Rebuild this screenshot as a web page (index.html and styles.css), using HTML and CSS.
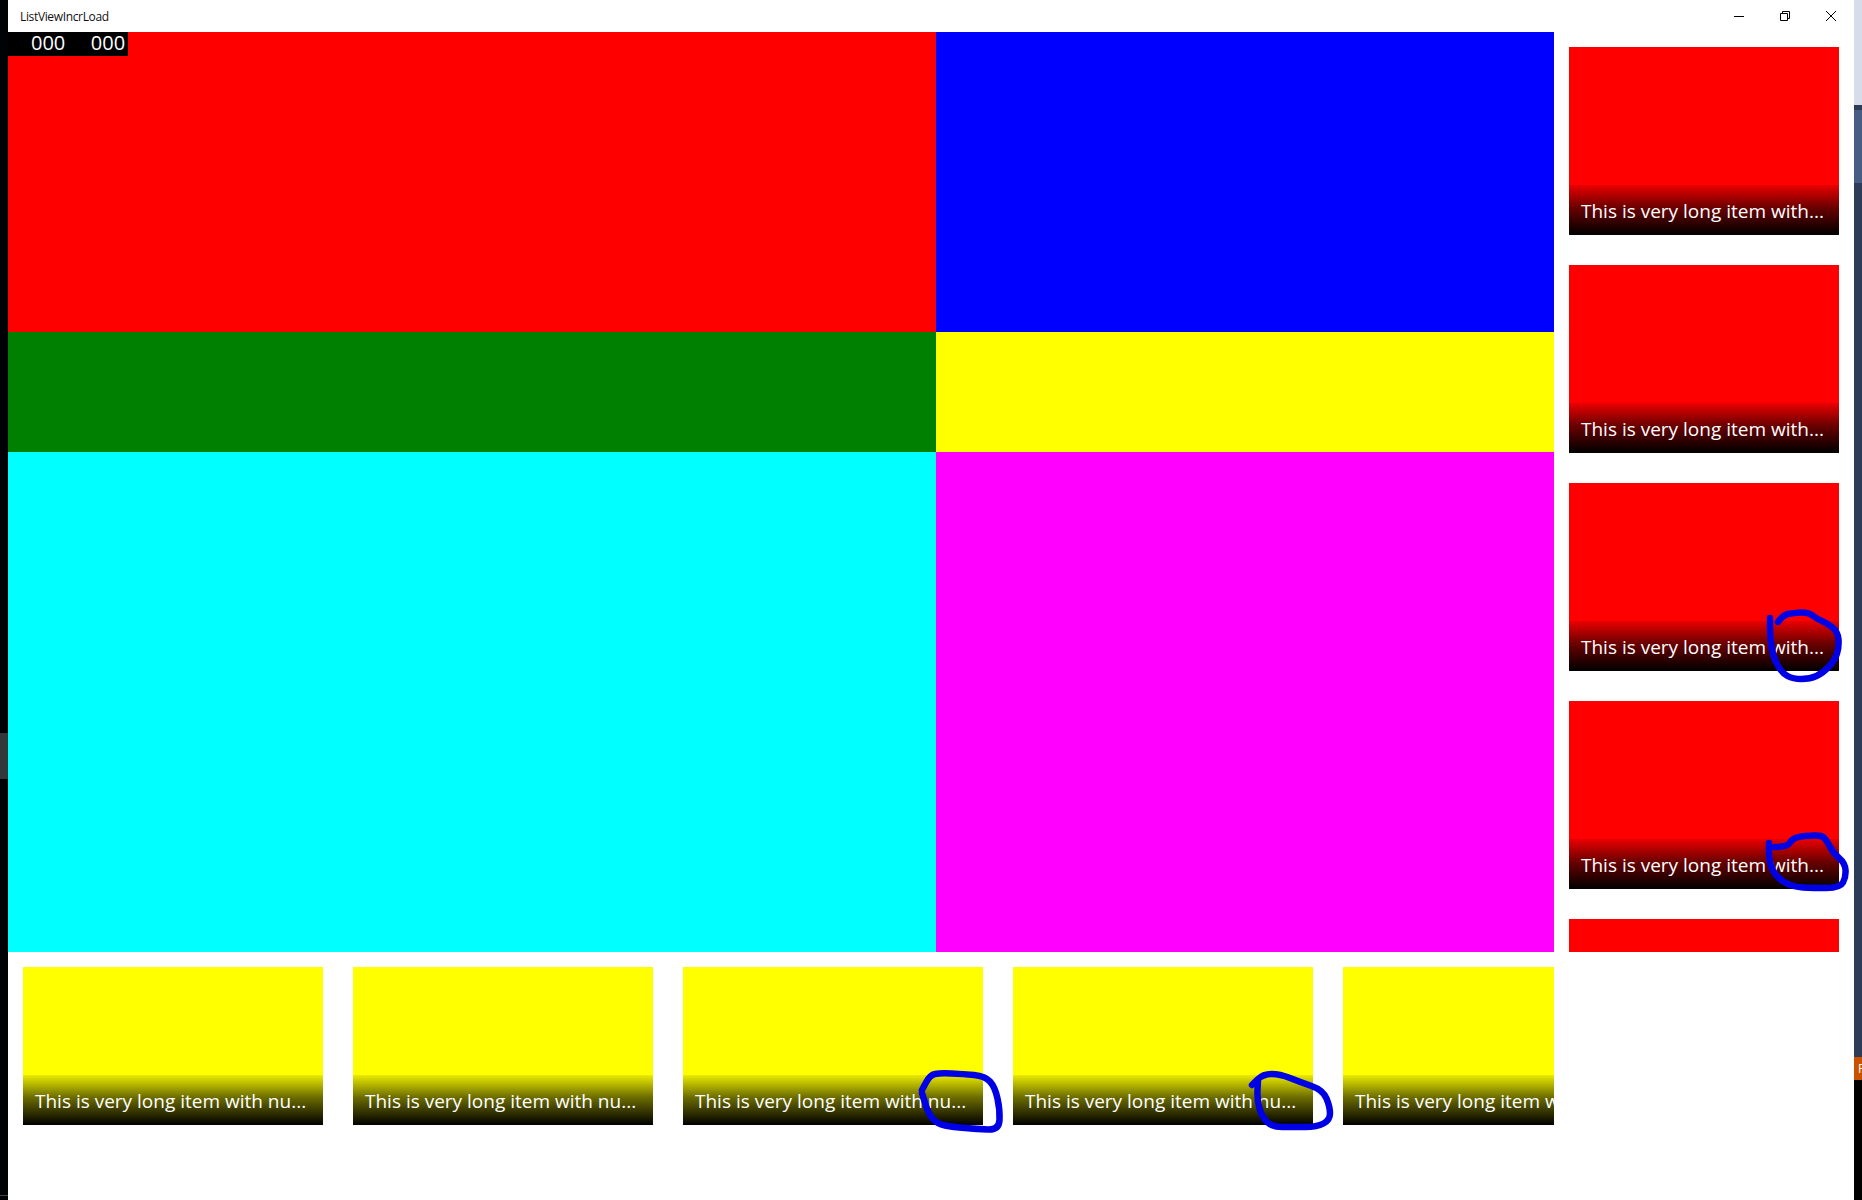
FILE: index.html
```html
<!DOCTYPE html>
<html lang="en">
<head>
<meta charset="utf-8">
<title>ListViewIncrLoad</title>
<link rel="stylesheet" href="styles.css">
</head>
<body>
<div class="desk">
  <div class="edge-left"><span class="edge-thumb"></span><span class="edge-line"></span></div>
  <main class="window">
    <header class="titlebar">
      <span class="app-title">ListViewIncrLoad</span>
      <div class="controls">
        <svg class="ctl" viewBox="0 0 10 10"><path d="M0 5.5H10"/></svg>
        <svg class="ctl" viewBox="0 0 10 10"><path d="M0.5 2.5H7.5V9.5H0.5ZM2.5 2.5V0.5H9.5V7.5H7.5"/></svg>
        <svg class="ctl" viewBox="0 0 10 10"><path d="M0 0L10 10M10 0L0 10"/></svg>
      </div>
    </header>
    <div class="content">
      <div class="left-col">
        <div class="grid">
          <div class="cell red"></div>
          <div class="cell blue"></div>
          <div class="cell green"></div>
          <div class="cell yellow"></div>
          <div class="cell cyan"></div>
          <div class="cell magenta"></div>
          <div class="fps"><span>000</span><span>000</span></div>
        </div>
        <div class="hlist">
          <div class="item hitem"><span class="cap">This is very long item with nu...</span></div>
          <div class="item hitem"><span class="cap">This is very long item with nu...</span></div>
          <div class="item hitem"><span class="cap">This is very long item with nu...</span></div>
          <div class="item hitem"><span class="cap">This is very long item with nu...</span></div>
          <div class="item hitem"><span class="cap">This is very long item with nu...</span></div>
        </div>
      </div>
      <div class="vlist">
        <div class="item vitem"><span class="cap">This is very long item with...</span></div>
        <div class="item vitem"><span class="cap">This is very long item with...</span></div>
        <div class="item vitem"><span class="cap">This is very long item with...</span></div>
        <div class="item vitem"><span class="cap">This is very long item with...</span></div>
        <div class="item vitem"><span class="cap">This is very long item with...</span></div>
      </div>
    </div>
  </main>
  <div class="edge-right">
    <span class="er-light"></span>
    <span class="er-dark"><span class="er-thumb"></span></span>
    <span class="er-orange">F</span>
    <span class="er-black"></span>
  </div>
  <svg class="ink" viewBox="0 0 1862 1200">
    <path d="M1770 618L1770 628Q1770 637 1771.5 647Q1773 657 1777.5 665Q1782 673 1787.5 676Q1793 679 1801.5 679Q1810 679 1816.5 676Q1823 673 1829 666.5Q1835 660 1837 653.5Q1839 647 1838.5 639.5Q1838 632 1832.5 627.5Q1827 623 1822 621Q1817 619 1812.5 615.5Q1808 612 1800.5 612.5Q1793 613 1788 614Q1783 615 1778 622"/>
    <path d="M1769 843L1769 853Q1769 863 1773 870.5Q1777 878 1785 882.5Q1793 887 1803 887.5Q1813 888 1826.5 888Q1840 888 1843 882.5Q1846 877 1845.5 870Q1845 863 1839 858Q1833 853 1829 845Q1825 837 1821 836Q1817 835 1805 836Q1793 837 1790.5 842Q1788 847 1775 847"/>
    <path d="M922 1090L926 1082.5Q930 1075 935 1074Q940 1073 951.5 1073.5Q963 1074 974 1075Q985 1076 990 1081.5Q995 1087 997.5 1098.5Q1000 1110 999.5 1120Q999 1130 988 1129.5Q977 1129 965 1128Q953 1127 945 1125.5Q937 1124 932.5 1118.5Q928 1113 925 1103L922 1093"/>
    <path d="M1252 1085L1257.5 1079.5Q1263 1074 1271.5 1074Q1280 1074 1290 1078Q1300 1082 1311.5 1086Q1323 1090 1326.5 1098.5Q1330 1107 1330 1113.5Q1330 1120 1323.5 1123.5Q1317 1127 1305 1127Q1293 1127 1282.5 1127Q1272 1127 1267 1122Q1262 1117 1259.5 1108.5Q1257 1100 1257.5 1090L1258 1080"/>
  </svg>
</div>
</body>
</html>
```

FILE: styles.css
```css
* { box-sizing: border-box; }
html, body { margin: 0; padding: 0; height: 100%; background: #fff; overflow: hidden; }
.desk { position: relative; display: flex; width: 1862px; height: 1200px; }
.edge-left { flex: 0 0 8px; background: #010205; display: flex; flex-direction: column; padding-top: 733px; }
.edge-thumb { display: block; height: 46px; background: #33373a; }
.edge-line { display: block; height: 1px; margin-top: 416px; background: #444; }
.window { flex: 0 0 1846px; background: #fff; display: flex; flex-direction: column; }
.titlebar { flex: 0 0 32px; display: flex; align-items: center; justify-content: space-between; padding: 0 18px 0 12px; }
.app-title { font: 12px "Open Sans", sans-serif; letter-spacing: -0.35px; color: #111; }
.controls { display: flex; gap: 36px; }
.ctl { width: 10px; height: 10px; display: block; fill: none; stroke: #000; stroke-width: 1; }
.content { display: flex; flex: 0 0 920px; }
.left-col { flex: 0 0 1546px; display: flex; flex-direction: column; }
.grid { position: relative; display: grid; grid-template-columns: 928px 618px; grid-template-rows: 300px 120px 500px; }
.red { background: #f00; }
.blue { background: #00f; }
.green { background: #008000; }
.yellow { background: #ff0; }
.cyan { background: #0ff; }
.magenta { background: #f0f; }
.fps { position: absolute; left: 0; top: 0; width: 120px; height: 24px; background: #000; color: #fff; font: 20px/22px "Open Sans", sans-serif; display: flex; gap: 25.5px; padding-left: 23px; }
.hlist { display: flex; gap: 30px; padding: 15px 0 0 15px; overflow: hidden; width: 1546px; }
.vlist { flex: 0 0 300px; height: 920px; overflow: hidden; display: flex; flex-direction: column; gap: 30px; padding: 15px 15px 0 15px; }
.item { flex: none; display: flex; align-items: flex-end; }
.hitem { width: 300px; height: 158px; background: #ff0; }
.vitem { width: 270px; height: 188px; background: #f00; }
.cap { display: block; width: 100%; height: 50px; padding-left: 12px; background: linear-gradient(to bottom, rgba(0,0,0,0.08), rgba(0,0,0,0.58) 45%, #000); color: #fff; font: 19px/52px "Open Sans", sans-serif; white-space: nowrap; overflow: hidden; }
.edge-right { flex: 0 0 8px; display: flex; flex-direction: column; }
.er-light { flex: 0 0 105px; background: #d6dce9; }
.er-dark { flex: 0 0 952px; background: #2d3c59; padding: 5px 2px 0 0; }
.er-thumb { display: block; height: 73px; background: #475d84; }
.er-orange { flex: 0 0 23px; background: #ca5100; color: #fff; font: 12px/23px "Open Sans", sans-serif; padding-left: 4px; overflow: hidden; }
.er-black { flex: 1; background: #000; }
.ink { position: absolute; left: 0; top: 0; width: 1862px; height: 1200px; pointer-events: none; fill: none; stroke: #0000e6; stroke-width: 6.5; stroke-linejoin: round; stroke-linecap: round; }
```
